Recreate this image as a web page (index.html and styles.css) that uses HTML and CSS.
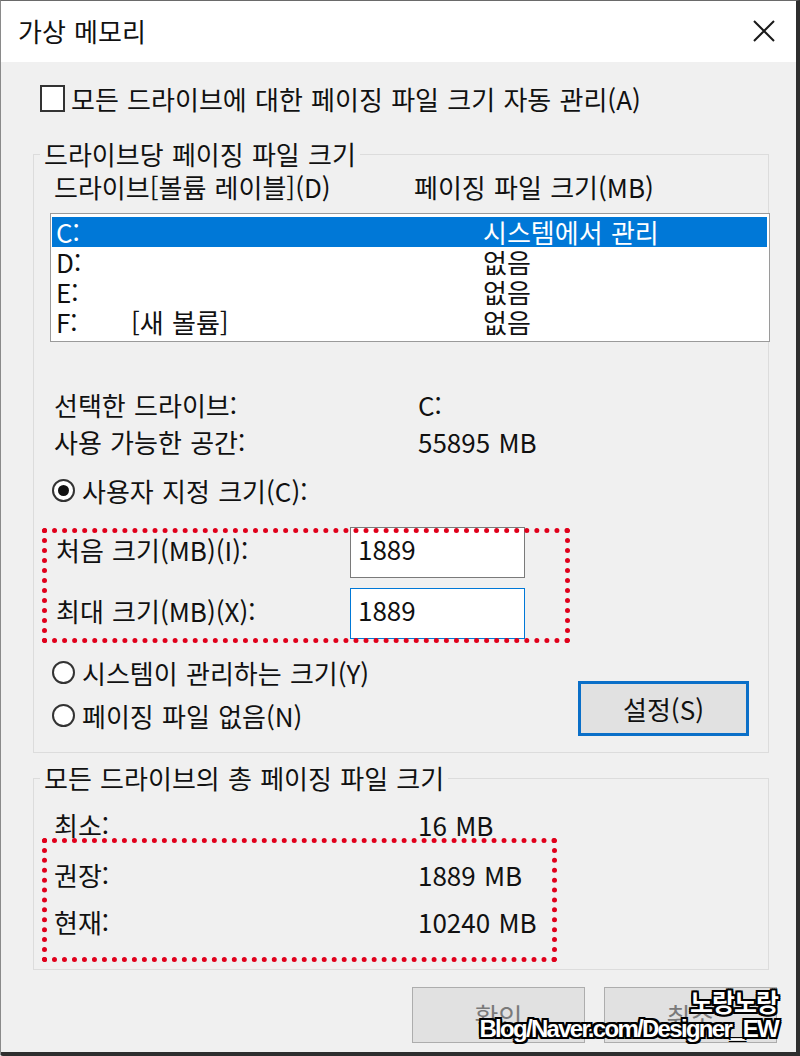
FILE: index.html
```html
<!DOCTYPE html>
<html lang="ko">
<head>
  <meta charset="UTF-8" />
  <title>가상 메모리</title>
  <link rel="stylesheet" href="styles.css">
</head>
<body>
  <div class="window">
    <!-- Title bar -->
    <div class="titlebar">
      <span class="title">가상 메모리</span>
      <svg class="close" width="24" height="24" viewBox="0 0 24 24">
        <path d="M2 2 L22 22 M22 2 L2 22" stroke="#1a1a1a" stroke-width="2" fill="none"/>
      </svg>
    </div>

    <div class="content">
      <div class="check-row"><span class="checkbox"></span>모든 드라이브에 대한 페이징 파일 크기 자동 관리(A)</div>

      <!-- Per drive -->
      <fieldset class="group group-drive">
        <legend>드라이브당 페이징 파일 크기</legend>
        <div class="cols">
          <span class="col-drive">드라이브[볼륨 레이블](D)</span>
          <span>페이징 파일 크기(MB)</span>
        </div>
        <div class="listbox">
          <div class="item selected"><span class="drv">C:</span><span>시스템에서 관리</span></div>
          <div class="item"><span class="drv">D:</span><span>없음</span></div>
          <div class="item"><span class="drv">E:</span><span>없음</span></div>
          <div class="item"><span class="drv"><span class="letter">F:</span>[새 볼륨]</span><span>없음</span></div>
        </div>

        <div class="kv first"><span class="k">선택한 드라이브:</span><span>C:</span></div>
        <div class="kv"><span class="k">사용 가능한 공간:</span><span>55895 MB</span></div>

        <div class="radio-row custom"><span class="radio on"></span>사용자 지정 크기(C):</div>

        <div class="sizes">
          <div class="size-row"><span class="size-label">처음 크기(MB)(I):</span><div class="textbox">1889</div></div>
          <div class="size-row"><span class="size-label">최대 크기(MB)(X):</span><div class="textbox focus">1889</div></div>
          <div class="mark mark-sizes"></div>
        </div>

        <div class="options">
          <div class="radios">
            <div class="radio-row"><span class="radio"></span>시스템이 관리하는 크기(Y)</div>
            <div class="radio-row"><span class="radio"></span>페이징 파일 없음(N)</div>
          </div>
          <button class="btn btn-set">설정(S)</button>
        </div>
      </fieldset>

      <!-- Totals -->
      <fieldset class="group group-total">
        <legend>모든 드라이브의 총 페이징 파일 크기</legend>
        <div class="kv min"><span class="k">최소:</span><span>16 MB</span></div>
        <div class="totals">
          <div class="kv"><span class="k">권장:</span><span>1889 MB</span></div>
          <div class="kv now"><span class="k">현재:</span><span>10240 MB</span></div>
          <div class="mark mark-totals"></div>
        </div>
      </fieldset>

      <div class="actions">
        <button class="btn btn-faded">확인</button>
        <button class="btn btn-faded">취소</button>
      </div>
    </div>

    <div class="watermark">
      <div class="wm-name">노랑노랑</div>
      <div class="wm-url">Blog/Naver.com/Designer_EW</div>
    </div>
  </div>
</body>
</html>
```

FILE: styles.css
```css
html, body {
  margin: 0;
  padding: 0;
  background: #f0f0f0;
}

.window {
  position: relative;
  width: 800px;
  height: 1056px;
  box-sizing: border-box;
  background: #f0f0f0;
  border-top: 1px solid #6a6a6a;
  border-left: 1px solid #8a8a8a;
  border-right: 4px solid #2e2e2e;
  border-bottom: 4px solid #2e2e2e;
  border-bottom-left-radius: 3px;
  font-family: "Noto Sans CJK KR", "Noto Sans", sans-serif;
  font-size: 26px;
  word-spacing: 1px;
  color: #111;
  overflow: hidden;
}

/* Title bar */
.titlebar {
  height: 61px;
  background: #fff;
  display: flex;
  align-items: center;
  justify-content: space-between;
  padding: 0 20px 0 17px;
}

.title {
  font-size: 26px;
  color: #111;
  margin-top: -3px;
}

.close {
  margin-top: -2px;
}

.content {
  padding: 0 27px 0 32px;
}

/* Checkbox row */
.check-row {
  display: flex;
  align-items: center;
  height: 30px;
  margin-top: 21px;
  padding-left: 7px;
}

.checkbox {
  width: 21px;
  height: 23px;
  border: 2px solid #333;
  background: #fff;
  margin-right: 6px;
}

/* Group boxes */
.group {
  margin: 0;
  border: 1px solid #dcdcdc;
  padding: 0 0 0 16px;
  min-width: 0;
}

.group legend {
  margin-left: -10px;
  padding: 0 4px;
  line-height: 28px;
}

.group-drive {
  margin-top: 27px;
  padding-bottom: 16px;
}

.cols {
  display: flex;
  line-height: 28px;
  margin-top: 5px;
  padding-left: 4px;
}

.col-drive {
  width: 360px;
}

/* List box */
.listbox {
  margin-top: 12px;
  margin-right: -2px;
  border: 1px solid #9a9a9a;
  background: #fff;
  padding: 3px 2px 4px 1px;
}

.item {
  display: flex;
  height: 30px;
  line-height: 30px;
  padding-left: 4px;
}

.item.selected {
  background: #0078d7;
  color: #fff;
}

.drv {
  width: 427px;
}

.letter {
  display: inline-block;
  width: 75px;
}

/* Key / value rows */
.kv {
  display: flex;
  line-height: 28px;
  padding-left: 4px;
}

.kv .k {
  width: 364px;
}

.kv.first {
  margin-top: 49px;
}

.kv + .kv {
  margin-top: 9px;
}

/* Radios */
.radio-row {
  display: flex;
  align-items: center;
  height: 30px;
  padding-left: 2px;
}

.radio-row.custom {
  margin-top: 19px;
}

.radio {
  width: 19px;
  height: 19px;
  border: 2px solid #333;
  border-radius: 50%;
  background: #fff;
  margin-right: 7px;
  position: relative;
}

.radio.on::after {
  content: "";
  position: absolute;
  left: 4px;
  top: 4px;
  width: 11px;
  height: 11px;
  border-radius: 50%;
  background: #111;
}

/* Size inputs */
.sizes {
  position: relative;
  margin-top: 22px;
}

.size-row {
  display: flex;
  align-items: center;
  height: 51px;
  padding-left: 6px;
}

.size-row + .size-row {
  margin-top: 10px;
}

.size-label {
  width: 294px;
  margin-top: -6px;
}

.textbox {
  width: 166px;
  height: 49px;
  border: 1px solid #7a7a7a;
  background: #fff;
  padding-left: 7px;
  line-height: 42px;
}

.textbox.focus {
  border-color: #0078d7;
}

/* Red annotation boxes */
.mark {
  position: absolute;
  border: 5px dotted #e0001b;
  border-radius: 2px;
  box-sizing: border-box;
}

.mark-sizes {
  left: -8px;
  top: 1px;
  width: 528px;
  height: 115px;
}

.mark-totals {
  left: -8px;
  top: -23px;
  width: 515px;
  height: 124px;
}

/* Options row */
.options {
  display: flex;
  justify-content: space-between;
  align-items: flex-start;
  margin-top: 18px;
}

.radios .radio-row + .radio-row {
  margin-top: 13px;
}

.btn {
  font-family: "Noto Sans CJK KR", "Noto Sans", sans-serif;
  font-size: 26px;
  color: #111;
  background: #e1e1e1;
  border: 1px solid #adadad;
  padding: 0;
}

.btn-set {
  width: 171px;
  height: 55px;
  margin-top: 24px;
  margin-right: 19px;
  border: 3px solid #0a6fc8;
}

/* Totals group */
.group-total {
  margin-top: 11px;
  padding-bottom: 33px;
}

.kv.min {
  margin-top: 19px;
}

.totals {
  position: relative;
  margin-top: 22px;
}

.kv.now {
  margin-top: 19px;
}

/* Bottom buttons */
.actions {
  display: flex;
  justify-content: flex-end;
  gap: 19px;
  margin-top: 17px;
  margin-right: -8px;
}

.btn-faded {
  width: 173px;
  height: 56px;
  color: #7a7a7a;
}

/* Watermark */
.watermark {
  position: absolute;
  right: 18px;
  bottom: 10px;
  text-align: right;
  color: #fff;
  font-weight: bold;
  line-height: 1.1;
  word-spacing: 0;
  text-shadow: -2px 0 #000, 2px 0 #000, 0 -2px #000, 0 2px #000,
    -2px -2px #000, 2px 2px #000, -2px 2px #000, 2px -2px #000;
}

.wm-name {
  font-size: 25px;
  letter-spacing: -1px;
}

.wm-url {
  font-size: 24px;
  letter-spacing: -1.7px;
  font-family: "Liberation Sans", sans-serif;
}
```
